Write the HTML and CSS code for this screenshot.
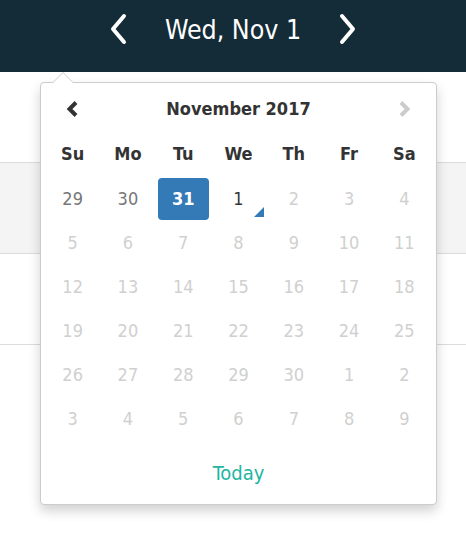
FILE: index.html
```html
<!DOCTYPE html>
<html>

<head>
  <title>Day view</title>
  <link rel="stylesheet" href="styles.css">
</head>

<body>
  <div class="topbar">
    <svg class="nav-arrow" width="20" height="32" viewBox="0 0 20 32"><polyline points="15,3 4,16 15,29" /></svg>
    <span class="current-date">Wed, Nov 1</span>
    <svg class="nav-arrow" width="20" height="32" viewBox="0 0 20 32"><polyline points="5,3 16,16 5,29" /></svg>
  </div>

  <div class="rows">
    <div class="row"></div>
    <div class="row row-shaded"></div>
    <div class="row"></div>
  </div>

  <div class="picker">
    <div class="picker-head">
      <span class="picker-prev">
        <svg width="16" height="18" viewBox="0 0 16 18"><polyline points="11,2.5 4.5,9 11,15.5" /></svg>
      </span>
      <span class="picker-title">November 2017</span>
      <span class="picker-next">
        <svg width="16" height="18" viewBox="0 0 16 18"><polyline points="5,2.5 11.5,9 5,15.5" /></svg>
      </span>
    </div>

    <div class="picker-dow">
      <span>Su</span><span>Mo</span><span>Tu</span><span>We</span><span>Th</span><span>Fr</span><span>Sa</span>
    </div>

    <div class="picker-days" id="days"></div>

    <div class="picker-foot">
      <span class="today-link">Today</span>
    </div>
  </div>

  <script>
    var days = document.getElementById("days");
    var cells = [
      [29, "old"], [30, "old"], [31, "active"], [1, "today"], [2], [3], [4],
      [5], [6], [7], [8], [9], [10], [11],
      [12], [13], [14], [15], [16], [17], [18],
      [19], [20], [21], [22], [23], [24], [25],
      [26], [27], [28], [29], [30], [1], [2],
      [3], [4], [5], [6], [7], [8], [9]
    ];

    for (var i = 0; i < cells.length; i++) {
      var el = document.createElement("span");
      el.className = "day " + (cells[i][1] || "disabled");
      el.innerText = cells[i][0];
      days.appendChild(el);
    }
  </script>
</body>

</html>
```

FILE: styles.css
```css
body {
  margin: 0;
  font-family: "DejaVu Sans Condensed", "DejaVu Sans", sans-serif;
  color: #333;
  background: #fff;
}
.topbar {
  height: 72px;
  box-sizing: border-box;
  padding-bottom: 14px;
  background: #142c37;
  display: flex;
  align-items: center;
  justify-content: center;
  gap: 36px;
}
.current-date {
  color: #fff;
  font-size: 26.5px;
}
.nav-arrow polyline {
  fill: none;
  stroke: #fff;
  stroke-width: 4;
  stroke-linecap: round;
  stroke-linejoin: round;
}
.row {
  height: 90px;
  border-bottom: 1px solid #dcdcdc;
}
.row-shaded {
  background: #f4f4f4;
}
/* the dropdown sits over the list */
.picker {
  position: absolute;
  top: 82px;
  left: 40px;
  width: 387px;
  padding: 1px 4px 9px;
  background: #fff;
  border: 1px solid #ccc;
  border-radius: 4px;
  box-shadow: 0 6px 12px rgba(0, 0, 0, 0.18);
}
.picker:before,
.picker:after {
  content: "";
  position: absolute;
  left: 11px;
  border-left: 11px solid transparent;
  border-right: 11px solid transparent;
}
.picker:before {
  top: -11px;
  border-bottom: 11px solid #ccc;
}
.picker:after {
  top: -10px;
  left: 12px;
  border-left-width: 10px;
  border-right-width: 10px;
  border-bottom: 10px solid #fff;
}
.picker-head,
.picker-dow,
.picker-days {
  display: grid;
  grid-template-columns: repeat(7, 1fr);
  text-align: center;
}
.picker-head {
  height: 46px;
  padding-top: 2px;
  box-sizing: border-box;
  line-height: 46px;
  font-size: 18px;
  font-weight: bold;
}
.picker-title {
  grid-column: 2 / 7;
}
.picker-head svg {
  vertical-align: middle;
  margin-top: -3px;
}
.picker-head polyline {
  fill: none;
  stroke-width: 4;
  stroke: #333;
}
.picker-next polyline {
  stroke: #ccc;
}
.picker-dow {
  height: 47px;
  line-height: 47px;
  font-size: 18px;
  font-weight: bold;
}
.day {
  position: relative;
  display: block;
  margin: 1px 2px;
  height: 42px;
  line-height: 42px;
  font-size: 18px;
  border-radius: 4px;
}
.day.old {
  color: #777;
}
.day.disabled {
  color: #d0d0d0;
}
.day.active {
  background: #337ab7;
  color: #fff;
  font-weight: bold;
}
.day.today:before {
  content: "";
  position: absolute;
  right: 0;
  bottom: 3px;
  border-left: 10px solid transparent;
  border-bottom: 10px solid #337ab7;
}
.picker-foot {
  margin-top: 10px;
  height: 44px;
  line-height: 44px;
  text-align: center;
  font-size: 20px;
}
.today-link {
  color: #22b5a1;
}
```
